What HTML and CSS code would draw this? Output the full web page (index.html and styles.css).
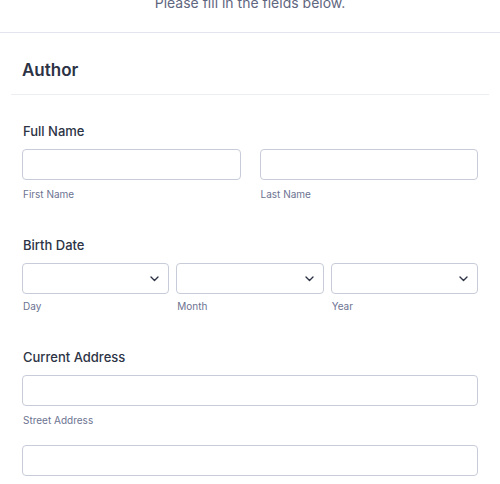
FILE: index.html
```html
<!DOCTYPE html>
<html lang="en">

<head>
  <meta charset="UTF-8" />
  <meta name="viewport" content="width=device-width, initial-scale=1.0" />
  <title>Author Form</title>
  <link rel="stylesheet" href="styles.css">
</head>

<body>
  <div class="form-header">
    <p class="subtitle">Please fill in the fields below.</p>
  </div>

  <div class="section">
    <h2 class="section-title">Author</h2>

    <div class="field">
      <label class="field-label">Full Name</label>
      <div class="row two">
        <div class="col">
          <input type="text" class="input" />
          <span class="sublabel">First Name</span>
        </div>
        <div class="col">
          <input type="text" class="input" />
          <span class="sublabel">Last Name</span>
        </div>
      </div>
    </div>

    <div class="field">
      <label class="field-label">Birth Date</label>
      <div class="row three">
        <div class="col">
          <div class="select-wrap">
            <select class="input select"><option></option></select>
            <svg class="chevron" width="9" height="6" viewBox="0 0 9 6"><path d="M1 1l3.5 3.5L8 1" fill="none" stroke="#2c3345" stroke-width="1.4" stroke-linecap="round" stroke-linejoin="round"/></svg>
          </div>
          <span class="sublabel">Day</span>
        </div>
        <div class="col">
          <div class="select-wrap">
            <select class="input select"><option></option></select>
            <svg class="chevron" width="9" height="6" viewBox="0 0 9 6"><path d="M1 1l3.5 3.5L8 1" fill="none" stroke="#2c3345" stroke-width="1.4" stroke-linecap="round" stroke-linejoin="round"/></svg>
          </div>
          <span class="sublabel">Month</span>
        </div>
        <div class="col">
          <div class="select-wrap">
            <select class="input select"><option></option></select>
            <svg class="chevron" width="9" height="6" viewBox="0 0 9 6"><path d="M1 1l3.5 3.5L8 1" fill="none" stroke="#2c3345" stroke-width="1.4" stroke-linecap="round" stroke-linejoin="round"/></svg>
          </div>
          <span class="sublabel">Year</span>
        </div>
      </div>
    </div>

    <div class="field">
      <label class="field-label">Current Address</label>
      <div class="col">
        <input type="text" class="input" />
        <span class="sublabel">Street Address</span>
      </div>
      <div class="col next-line">
        <input type="text" class="input" />
      </div>
    </div>
  </div>
</body>

</html>
```

FILE: styles.css
```css
body {
  font-family: Inter, "Noto Sans", sans-serif;
  margin: 0;
  padding: 0;
  background-color: #ffffff;
  color: #2c3345;
  overflow: hidden;
}

/* header with the intro text (scrolled past) */
.form-header {
  height: 33px;
  border-bottom: 1px solid #e3e5ee;
  box-sizing: border-box;
  text-align: center;
}

.subtitle {
  margin: 0;
  position: relative;
  top: -7px;
  font-size: 14px;
  line-height: 20px;
  color: #5f6680;
}

.section {
  padding: 0 11px;
}

.section-title {
  margin: 0;
  padding: 25px 11px 12px;
  font-size: 17px;
  line-height: 24px;
  font-weight: 600;
  border-bottom: 1px solid #eceef4;
}

.field {
  padding: 0 11px;
  margin-top: 27px;
}

.field + .field {
  margin-top: 35px;
}

.field-label {
  display: block;
  font-size: 13px;
  line-height: 18px;
  font-weight: 500;
  margin-bottom: 9px;
  padding-left: 1px;
}

.row {
  display: grid;
}

.row.two {
  grid-template-columns: 1fr 1fr;
  gap: 19px;
}

.row.three {
  grid-template-columns: 1fr 1fr 1fr;
  gap: 7px;
}

.col {
  display: flex;
  flex-direction: column;
}

.next-line {
  margin-top: 18px;
}

.input {
  display: block;
  width: 100%;
  height: 31px;
  box-sizing: border-box;
  border: 1px solid #c8ccd9;
  border-radius: 4px;
  background-color: #ffffff;
  font-family: inherit;
  font-size: 13px;
  padding: 0 10px;
  margin: 0;
}

.select-wrap {
  position: relative;
}

.select {
  appearance: none;
  -webkit-appearance: none;
}

.chevron {
  position: absolute;
  right: 10px;
  top: 13px;
  pointer-events: none;
}

.sublabel {
  font-size: 10px;
  line-height: 14px;
  color: #6c7391;
  margin-top: 7px;
  padding-left: 1px;
}

.row.three .sublabel {
  margin-top: 5px;
}
```
